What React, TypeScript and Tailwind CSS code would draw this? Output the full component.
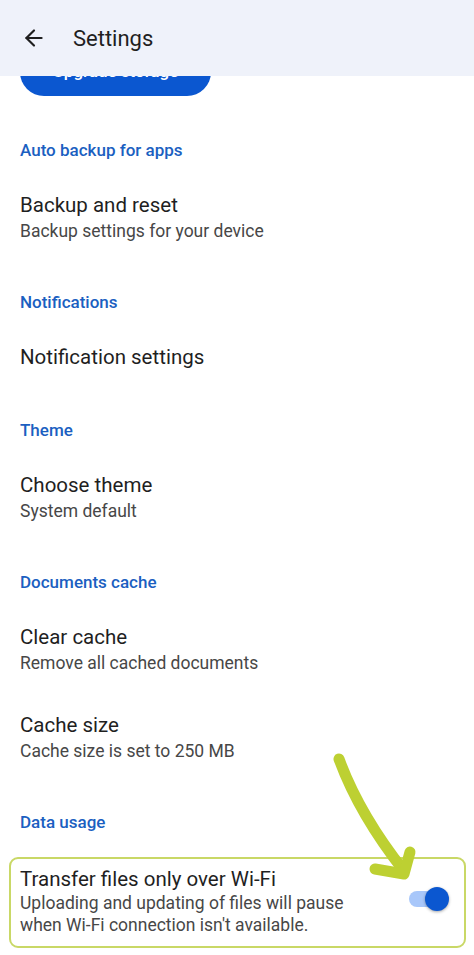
import { ArrowLeft } from "lucide-react";

const SectionHeader = ({ title }: { title: string }) => (
  <div className="px-5 pt-[28px] pb-[12px] text-[17px] leading-[24px] font-medium text-[#1b5fc1]">{title}</div>
);

const Item = ({ title, subtitle }: { title: string; subtitle?: string }) => (
  <div className={`px-5 pt-[18px] ${subtitle ? "pb-[18px]" : "pb-[20px]"}`}>
    <div className="text-[20.5px] leading-[26px] text-[#1f1f1f]">{title}</div>
    {subtitle && <div className="text-[17.5px] leading-[26px] text-[#474747]">{subtitle}</div>}
  </div>
);

export default function App() {
  return (
    <div className="relative w-[474px] h-[955px] overflow-hidden bg-white font-['Roboto',sans-serif]">
      <header className="relative z-10 h-[76px] bg-[#eff2fa] flex items-center">
        <ArrowLeft className="ml-[21px] text-[#1f1f1f]" size={26} strokeWidth={2} />
        <span className="ml-[26px] text-[22px] text-[#1f1f1f]">Settings</span>
      </header>

      <div>
        <div className="px-5">
          <button className="block -mt-[28px] h-12 w-[191px] rounded-full bg-[#0b57d0] text-white text-[17px] font-medium">
            Upgrade storage
          </button>
        </div>

        <div className="mt-[14px]">
          <SectionHeader title="Auto backup for apps" />
          <Item title="Backup and reset" subtitle="Backup settings for your device" />

          <SectionHeader title="Notifications" />
          <Item title="Notification settings" />

          <SectionHeader title="Theme" />
          <Item title="Choose theme" subtitle="System default" />

          <SectionHeader title="Documents cache" />
          <Item title="Clear cache" subtitle="Remove all cached documents" />
          <Item title="Cache size" subtitle="Cache size is set to 250 MB" />

          <SectionHeader title="Data usage" />
          <div className="mt-[11px] ml-[9px] w-[457px] rounded-[9px] border-2 border-[#c9d866] pl-[9px] pr-3 pt-[7px] pb-[10px] flex items-center">
            <div className="flex-1">
              <div className="text-[20.5px] leading-[26px] text-[#1f1f1f]">Transfer files only over Wi-Fi</div>
              <div className="text-[17.5px] leading-[22px] text-[#474747]">
                Uploading and updating of files will pause
                <br />
                when Wi-Fi connection isn't available.
              </div>
            </div>
            <div className="relative w-[40px] h-[26px] mr-[3px] -mt-[4px] flex items-center">
              <div className="w-[38px] h-[16px] rounded-full bg-[#a8c7fa]" />
              <div className="absolute right-[0px] top-[1px] w-[24px] h-[24px] rounded-full bg-[#0b57d0] shadow-[0_1px_3px_rgba(0,0,0,0.35)]" />
            </div>
          </div>
        </div>
      </div>

      <svg className="absolute inset-0 pointer-events-none" width="474" height="955" viewBox="0 0 474 955">
        <path d="M339 759 C 354 800, 378 838, 404 871" fill="none" stroke="#bdd032" strokeWidth="11" strokeLinecap="round" />
        <path d="M410 852 L 404 874 L 375 869" fill="none" stroke="#bdd032" strokeWidth="11" strokeLinecap="round" strokeLinejoin="round" />
      </svg>
    </div>
  );
}
